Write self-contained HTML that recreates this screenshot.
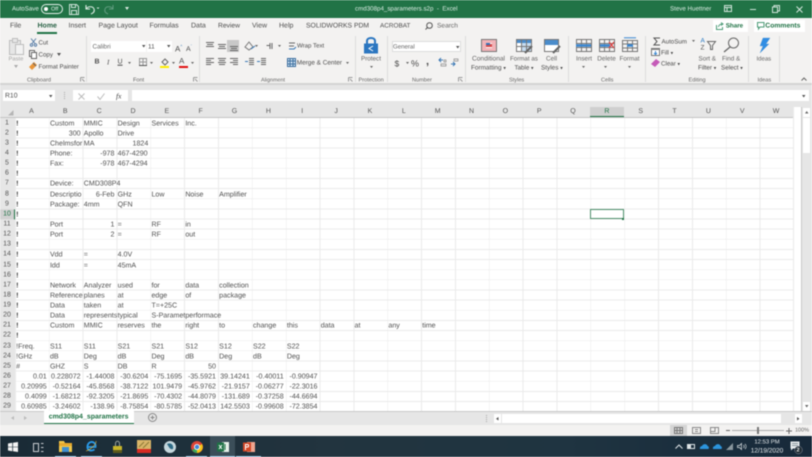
<!DOCTYPE html>
<html><head><meta charset="utf-8"><style>
html,body{margin:0;padding:0;width:812px;height:457px;overflow:hidden;background:#fff}
body{position:relative;font-family:"Liberation Sans",sans-serif;font-size:6.200px;color:#4d4d4d;filter:blur(.45px);text-rendering:geometricPrecision}
.a,.t{position:absolute}
.t{white-space:nowrap;line-height:10px;transform:translateY(.7px)}
.g{color:#666;font-size:5.600px}
svg{position:absolute;overflow:visible}
.rw{position:absolute;left:14.500px;height:10.140px;width:778.600px;display:grid;grid-template-columns:repeat(23,33.850px);line-height:10px;font-size:7.100px;color:#4f4f4f;transform:translateY(.4px)}
.rw>*{white-space:nowrap;padding-left:1.600px;font-style:normal;font-weight:400}
.rw>i:first-child{color:#2e2e2e;font-weight:700}
.rw>i.x:first-child{color:#4f4f4f;font-weight:400}
.rw>u{text-decoration:none;text-align:right;padding:0 1.600px 0 0;overflow:hidden}
.rn{position:absolute;left:0;width:14px;text-align:center;line-height:10px;font-size:7px;color:#555;transform:translateY(.4px)}
.ch{position:absolute;top:107px;height:10px;width:33.850px;text-align:center;line-height:10px;font-size:7px;color:#555}
</style></head><body>
<!-- title bar -->
<div class="a" style="left:0;top:0;width:812px;height:18px;background:#217346"></div>
<div class="t" style="left:12px;top:4px;color:#dfeee6">AutoSave</div>
<div class="a" style="left:41px;top:4px;width:20px;height:8px;border:1px solid #e4f0ea;border-radius:5px"></div>
<div class="a" style="left:44px;top:6.500px;width:4px;height:4px;background:#fff;border-radius:50%"></div>
<div class="t" style="left:51px;top:4px;color:#e4f0ea;font-size:5.500px">Off</div>
<svg style="left:69px;top:4px" width="10" height="11" fill="none" stroke="#cfe3d9" stroke-width="1"><path d="M.5.500h7l2 2v8H.5zM2.500.5v3h4v-3M2.500 10.500v-4h5v4"/></svg>
<svg style="left:85px;top:4px" width="14" height="10" fill="none" stroke="#dbeae2" stroke-width="1.100"><path d="M1 1v4h4M1 5c2-3 7-3 8 0s-1 4-3 5"/><path d="M11.500 3.500h3l-1.500 1.500z" fill="#dbeae2" stroke="none"/></svg>
<svg style="left:104px;top:4px" width="14" height="10" fill="none" stroke="#5f9b7e" stroke-width="1"><path d="M9 1v4H5M9 5C7 2 2 2 1 5s1 4 3 5"/></svg>
<svg style="left:125px;top:7px" width="5" height="4" fill="#dbeae2"><path d="M0 0h4L2 3z"/></svg>
<div class="t" style="left:355px;top:4px;color:#d9eae1">cmd308p4_sparameters.s2p &nbsp;-&nbsp; Excel</div>
<div class="t" style="left:670px;top:4px;color:#d9eae1">Steve Huettner</div>
<svg style="left:724px;top:5px" width="9" height="8" fill="none" stroke="#cfe3d9"><path d="M.5.500h7v6h-7zM.5 2.500h7M3 2.500v4"/></svg>
<div class="a" style="left:750px;top:9px;width:6px;height:1px;background:#cfe3d9"></div>
<svg style="left:772px;top:5px" width="8" height="8" fill="none" stroke="#cfe3d9"><path d="M.5 2h5v5.500h-5zM2 2V.5h5.500V6H6"/></svg>
<svg style="left:796px;top:6px" width="7" height="7" fill="none" stroke="#d5e6dd"><path d="M.5.500l6 6M6.500.5l-6 6"/></svg>

<!-- ribbon -->
<div class="a" style="left:0;top:18px;width:812px;height:66px;background:#f3f2f1"></div>
<div class="t" style="left:10px;top:21px;font-size:7px">File</div>
<div class="t" style="left:37.500px;top:21px;font-size:7px;color:#2b6347;font-weight:700">Home</div>
<div class="a" style="left:37px;top:32px;width:20px;height:1.500px;background:#217346"></div>
<div class="t" style="left:68.500px;top:21px;font-size:7px">Insert</div>
<div class="t" style="left:98.500px;top:21px;font-size:7px">Page Layout</div>
<div class="t" style="left:149.500px;top:21px;font-size:7px">Formulas</div>
<div class="t" style="left:191px;top:21px;font-size:7px">Data</div>
<div class="t" style="left:218px;top:21px;font-size:6.700px">Review</div>
<div class="t" style="left:252px;top:21px;font-size:7px">View</div>
<div class="t" style="left:279px;top:21px;font-size:7px">Help</div>
<div class="t" style="left:306px;top:21px;font-size:6.800px">SOLIDWORKS PDM</div>
<div class="t" style="left:380px;top:21px;font-size:6.400px">ACROBAT</div>
<svg style="left:425px;top:22px" width="8" height="8" fill="none" stroke="#555"><circle cx="4.500" cy="3.500" r="2.800"/><path d="M2.500 5.500L.5 7.500"/></svg>
<div class="t" style="left:437px;top:21px;font-size:6.600px;color:#666">Search</div>
<div class="a" style="left:713px;top:20px;width:35px;height:12px;background:#fff"></div>
<svg style="left:716px;top:22px" width="8" height="8" fill="none" stroke="#4b9a76"><path d="M.5 3v4.500h6V5M2.500 5c0-2 2-3 4-3M5 .5l2 1.500-2 1.500"/></svg>
<div class="t" style="left:725.700px;top:21px;color:#217346;font-size:6.300px;font-weight:700">Share</div>
<div class="a" style="left:754px;top:20px;width:51px;height:12px;background:#fff"></div>
<svg style="left:757px;top:22px" width="8" height="8" fill="none" stroke="#4b9a76"><path d="M.5.500h6.500v4.500H3L1.500 7V5h-1z"/></svg>
<div class="t" style="left:765.300px;top:21px;color:#217346;font-size:6.800px;font-weight:700">Comments</div>

<!-- clipboard -->
<svg style="left:9px;top:38px" width="16" height="18" fill="#e6e6e6" stroke="#bdbdbd"><path d="M.5 2.500h11v14H.5z"/><path d="M3.500.5h5v4h-5z"/><path d="M6.500 6.500h8v10h-8z" fill="#f2f2f2"/></svg>
<div class="t" style="left:8.500px;top:54px;color:#a6a6a6;font-size:5.800px">Paste</div>
<svg style="left:14px;top:65px" width="4" height="3" fill="#aaa"><path d="M0 0h4L2 3z"/></svg>
<svg style="left:30px;top:38px" width="7" height="9" fill="none" stroke="#5a7fa8"><path d="M1 .5l4 5M6 .5l-4 5"/><circle cx="1.500" cy="7" r="1.200"/><circle cx="5.500" cy="7" r="1.200"/></svg>
<div class="t" style="left:38.500px;top:38px;font-size:6.200px">Cut</div>
<svg style="left:29px;top:50px" width="9" height="9" fill="#fff" stroke="#666"><path d="M.5.500h5v6h-5z"/><path d="M2.500 2.500h5v6h-5z"/></svg>
<div class="t" style="left:38.500px;top:50px;font-size:6.200px">Copy</div>
<svg style="left:57px;top:53px" width="4" height="3" fill="#555"><path d="M0 0h4L2 3z"/></svg>
<svg style="left:29px;top:62px" width="9" height="9"><path d="M0 5l5-5 3 3-5 5z" fill="#e8953a"/><path d="M4 1l3 3" stroke="#666" fill="none"/></svg>
<div class="t" style="left:38.500px;top:62px;font-size:6.100px">Format Painter</div>
<div class="t g" style="left:27px;top:74.500px">Clipboard</div>
<!-- separators -->
<div class="a" style="left:86px;top:36px;width:1px;height:46px;background:#dcdcdc"></div>
<div class="a" style="left:198.500px;top:36px;width:1px;height:46px;background:#dcdcdc"></div>
<div class="a" style="left:354.500px;top:36px;width:1px;height:46px;background:#dcdcdc"></div>
<div class="a" style="left:386.500px;top:36px;width:1px;height:46px;background:#dcdcdc"></div>
<div class="a" style="left:465px;top:36px;width:1px;height:46px;background:#dcdcdc"></div>
<div class="a" style="left:568px;top:36px;width:1px;height:46px;background:#dcdcdc"></div>
<div class="a" style="left:645px;top:36px;width:1px;height:46px;background:#dcdcdc"></div>
<div class="a" style="left:748px;top:36px;width:1px;height:46px;background:#dcdcdc"></div>
<div class="a" style="left:779px;top:36px;width:1px;height:46px;background:#dcdcdc"></div>

<!-- font -->
<div class="a" style="left:90.500px;top:41px;width:55px;height:11px;background:#fff"></div>
<div class="t" style="left:92.500px;top:41.500px;font-size:6.400px;color:#666">Calibri</div>
<svg style="left:141.500px;top:45px" width="4" height="3" fill="#555"><path d="M0 0h3.500L1.700 2.500z"/></svg>
<div class="a" style="left:146.500px;top:41px;width:25px;height:11px;background:#fff"></div>
<div class="t" style="left:148px;top:41.500px;font-size:6.400px">11</div>
<svg style="left:167px;top:45px" width="4" height="3" fill="#555"><path d="M0 0h3.500L1.700 2.500z"/></svg>
<div class="t" style="left:175px;top:40.500px;font-size:8px">A<sup style="font-size:4px;color:#3a78b5">^</sup></div>
<div class="t" style="left:186px;top:41px;font-size:7px">A<sup style="font-size:4px;color:#3a78b5">ˇ</sup></div>
<div class="t" style="left:94.500px;top:56.500px;font-size:7px;font-weight:700">B</div>
<div class="t" style="left:107px;top:56.500px;font-size:7px;font-style:italic;font-family:'Liberation Serif',serif">I</div>
<div class="t" style="left:117.500px;top:56.500px;font-size:7px;text-decoration:underline">U</div>
<svg style="left:128px;top:62px" width="4" height="3" fill="#666"><path d="M0 0h3L1.500 2z"/></svg>
<svg style="left:138px;top:57px" width="10" height="10" fill="none" stroke="#999"><path d="M1.500 1.500h7v7h-7zM5 1.500v7M1.500 5h7"/><path d="M1 8.500h8" stroke="#555"/></svg>
<svg style="left:150px;top:62px" width="4" height="3" fill="#666"><path d="M0 0h3L1.500 2z"/></svg>
<svg style="left:160px;top:58px" width="10" height="8" fill="none" stroke="#666"><path d="M2 4l3-3 3 3-3 3z"/></svg>
<div class="a" style="left:160px;top:65.500px;width:9px;height:2px;background:#ffee00"></div>
<svg style="left:172px;top:62px" width="4" height="3" fill="#666"><path d="M0 0h3L1.500 2z"/></svg>
<div class="t" style="left:179px;top:56px;font-size:8px;color:#555">A</div>
<div class="a" style="left:178.500px;top:65.500px;width:9px;height:2px;background:#e01010"></div>
<svg style="left:190.500px;top:62px" width="4" height="3" fill="#666"><path d="M0 0h3L1.500 2z"/></svg>
<div class="t g" style="left:133px;top:74.500px">Font</div>
<svg style="left:80px;top:77px" width="5" height="5" fill="none" stroke="#999"><path d="M.5.500h4M.5.500v4M2 2l2.500 2.500"/></svg>
<svg style="left:192.500px;top:77px" width="5" height="5" fill="none" stroke="#999"><path d="M.5.500h4M.5.500v4M2 2l2.500 2.500"/></svg>
<svg style="left:348px;top:77px" width="5" height="5" fill="none" stroke="#999"><path d="M.5.500h4M.5.500v4M2 2l2.500 2.500"/></svg>
<svg style="left:458px;top:77px" width="5" height="5" fill="none" stroke="#999"><path d="M.5.500h4M.5.500v4M2 2l2.500 2.500"/></svg>

<!-- alignment -->
<div class="a" style="left:227px;top:40px;width:12px;height:12px;background:#c8c8c8"></div>
<svg style="left:205px;top:42px" width="34" height="9" fill="none" stroke="#666"><path d="M1 .5h8M2 2.500h6M1 4.500h8M13 2.500h8M14 4.500h6M13 6.500h8M25 4.500h8M26 6.500h6M25 8.500h8"/></svg>
<svg style="left:244px;top:41px" width="12" height="10" fill="none" stroke="#777"><path d="M1 6l4-5 4 5-4 3z"/><path d="M7 8l4-3" stroke="#3a78b5"/></svg>
<svg style="left:255px;top:45px" width="4" height="3" fill="#666"><path d="M0 0h3L1.500 2z"/></svg>
<svg style="left:266px;top:42px" width="9" height="8" fill="none" stroke="#666"><path d="M.5 3.500h3M6 1v6M4 1v6"/></svg>
<svg style="left:278px;top:45px" width="4" height="3" fill="#666"><path d="M0 0h3L1.500 2z"/></svg>
<svg style="left:288px;top:42px" width="9" height="10" fill="none" stroke="#666"><path d="M1 1h6M1 4h5"/><path d="M1 7h5l2-2" stroke="#3a78b5"/></svg>
<div class="t" style="left:297px;top:41px;font-size:6.100px">Wrap Text</div>
<svg style="left:205px;top:58px" width="34" height="9" fill="none" stroke="#666"><path d="M1 .5h8M1 2.500h5M1 4.500h8M1 6.500h5M13 .5h8M14 2.500h6M13 4.500h8M14 6.500h6M25 .5h8M28 2.500h5M25 4.500h8M28 6.500h5"/></svg>
<svg style="left:245px;top:58px" width="21" height="9" fill="none" stroke="#666"><path d="M4 .5h5M4 2.500h5M4 4.500h5M4 6.500h5M16 .5h5M16 2.500h5M16 4.500h5M16 6.500h5"/><path d="M0 3.500h3M12 3.500h3" stroke="#3a78b5"/></svg>
<svg style="left:287px;top:58px" width="9" height="9" fill="#cfe2f3" stroke="#3d6f9e"><path d="M.5.500h8v8h-8zM.5 3h8M.5 6h8M3 .5v8M6 .5v8"/></svg>
<div class="t" style="left:296.800px;top:58px;font-size:6.400px">Merge &amp; Center</div>
<svg style="left:346px;top:62px" width="4" height="3" fill="#666"><path d="M0 0h3L1.500 2z"/></svg>
<div class="t g" style="left:261px;top:74.500px;font-size:5.400px">Alignment</div>

<!-- protect -->
<svg style="left:363px;top:37px" width="16" height="17"><path d="M4 7V4c0-4 8-4 8 0v3" fill="none" stroke="#2b76c0" stroke-width="2"/><path d="M1 6.500h14v10H1z" fill="#2b76c0"/><path d="M10 9l-4 2.500 4 2.500" fill="none" stroke="#fff"/></svg>
<div class="t" style="left:361px;top:54px;font-size:6.300px;color:#666">Protect</div>
<svg style="left:369.500px;top:66px" width="4" height="3" fill="#666"><path d="M0 0h3L1.500 2z"/></svg>
<div class="t g" style="left:358.500px;top:74.500px">Protection</div>

<!-- number -->
<div class="a" style="left:391.500px;top:41px;width:69px;height:11px;background:#fff;border:.5px solid #ddd;box-sizing:border-box"></div>
<div class="t" style="left:393px;top:41.500px;font-size:6.100px;color:#666">General</div>
<svg style="left:456px;top:45.500px" width="4" height="3" fill="#555"><path d="M0 0h3.500L1.700 2.500z"/></svg>
<div class="t" style="left:394.500px;top:57.500px;font-size:8.500px">$</div>
<svg style="left:405.500px;top:62px" width="4" height="3" fill="#666"><path d="M0 0h3L1.500 2z"/></svg>
<div class="t" style="left:411px;top:57.500px;font-size:9px">%</div>
<div class="t" style="left:426px;top:56px;font-size:11px;font-weight:700">,</div>
<svg style="left:439px;top:58px" width="8" height="9" fill="none" stroke="#3a78b5"><path d="M0 2h4M2 0L0 2l2 2"/><path d="M5 2h2v2H5zM2 6h5v2H2z" stroke="#888" stroke-width=".7"/></svg>
<svg style="left:451px;top:58px" width="8" height="9" fill="none" stroke="#3a78b5"><path d="M0 6h4M2 4l2 2-2 2"/><path d="M3 1h4v2H3z" stroke="#888" stroke-width=".7"/></svg>
<div class="t g" style="left:412px;top:74.500px">Number</div>

<!-- styles -->
<svg style="left:481px;top:39px" width="16" height="13"><path d="M.5.500h15v12H.5z" fill="#fff" stroke="#777"/><path d="M1 1h4v11H1zM11 1h4v11h-4zM5 1h6v3H5zM5 9h6v3H5z" fill="#f2b3b8"/><path d="M5 5h6v3H5z" fill="#d84848"/><path d="M5 4h4v2H5z" fill="#3272b8"/></svg>
<div class="t" style="left:472px;top:54px;font-size:6.600px;color:#666">Conditional</div>
<div class="t" style="left:471px;top:63px;font-size:6.400px">Formatting <span style="font-size:5px">▾</span></div>
<svg style="left:516px;top:39px" width="17" height="15"><path d="M.5.500h15v12H.5z" fill="#fff" stroke="#777"/><path d="M1 1h14v3H1z" fill="#4a8ccb"/><path d="M6 4h9v8H6z" fill="#c6dcf0"/><path d="M1 7.500h14M5.500 1v11M10.500 1v11" stroke="#777"/><path d="M9 14l7-7" stroke="#666" stroke-width="2"/></svg>
<div class="t" style="left:510px;top:54px;font-size:6.200px;color:#666">Format as</div>
<div class="t" style="left:514.500px;top:63px;font-size:6.200px">Table <span style="font-size:5px">▾</span></div>
<svg style="left:544px;top:39px" width="17" height="15"><path d="M.5.500h14v12H.5z" fill="#fff" stroke="#777"/><path d="M1 1h13v5H1z" fill="#4a8ccb"/><path d="M9 14l7-7" stroke="#666" stroke-width="2"/></svg>
<div class="t" style="left:546px;top:54px;font-size:6.400px;color:#666">Cell</div>
<div class="t" style="left:541px;top:63px;font-size:6.400px">Styles <span style="font-size:5px">▾</span></div>
<div class="t g" style="left:509px;top:74.500px">Styles</div>

<!-- cells -->
<svg style="left:576px;top:39px" width="16" height="13" fill="none" stroke="#777"><path d="M.5.500h15v12H.5zM.5 4.500h15M.5 8.500h15M5.500.5v12M10.500.5v12"/><path d="M0 6.500h15" stroke="#3a86d0" stroke-width="2.500"/></svg>
<div class="t" style="left:576px;top:54px;font-size:6.400px;color:#666">Insert</div>
<svg style="left:581.500px;top:66px" width="4" height="3" fill="#666"><path d="M0 0h3L1.500 2z"/></svg>
<svg style="left:599px;top:39px" width="16" height="13" fill="none" stroke="#777"><path d="M.5.500h15v12H.5zM.5 4.500h15M.5 8.500h15M5.500.5v12M10.500.5v12"/><path d="M1 6.500h10" stroke="#3a86d0" stroke-width="2.500"/><path d="M10 3l5 6M15 3l-5 6" stroke="#e04040" stroke-width="1.200"/></svg>
<div class="t" style="left:597.300px;top:54px;font-size:6.400px;color:#666">Delete</div>
<svg style="left:604px;top:66px" width="4" height="3" fill="#666"><path d="M0 0h3L1.500 2z"/></svg>
<svg style="left:622px;top:37px" width="16" height="15" fill="none" stroke="#777"><path d="M.5 3.500h15v11H.5zM.5 7h15M.5 11h15M5.500 3.500v11M10.500 3.500v11"/><path d="M2 .8h12" stroke="#3a86d0"/><path d="M5 8.500h6" stroke="#3a86d0" stroke-width="2.500"/></svg>
<div class="t" style="left:619.500px;top:54px;font-size:6.300px;color:#666">Format</div>
<svg style="left:628px;top:66px" width="4" height="3" fill="#666"><path d="M0 0h3L1.500 2z"/></svg>
<div class="t g" style="left:601px;top:74.500px">Cells</div>

<!-- editing -->
<svg style="left:652.500px;top:37px" width="8" height="9" fill="none" stroke="#555"><path d="M7 1H1l3 3.500L1 8h6"/></svg>
<div class="t" style="left:661.500px;top:36.500px;font-size:6.200px">AutoSum</div>
<svg style="left:692px;top:40px" width="4" height="3" fill="#666"><path d="M0 0h3L1.500 2z"/></svg>
<svg style="left:651px;top:48px" width="9" height="8" fill="#fff" stroke="#777"><path d="M.5.500h8v7h-8z"/><path d="M.5 1.500h8" stroke="#888"/><path d="M4.500 3v3M3 5l1.500 1.500L6 5" stroke="#3a86d0" fill="none"/></svg>
<div class="t" style="left:661px;top:47.500px;font-size:6.200px">Fill <span style="font-size:5px">▾</span></div>
<svg style="left:651px;top:59px" width="9" height="9"><path d="M0 5l5-5 4 3-5 5z" fill="#c55bb8"/></svg>
<div class="t" style="left:661px;top:59px;font-size:6.200px">Clear <span style="font-size:5px">▾</span></div>
<div class="t" style="left:700.500px;top:37px;font-size:6.500px;color:#2f7dc4;line-height:7px">A<br><span style="color:#555">Z</span></div>
<svg style="left:707px;top:41px" width="9" height="9" fill="none" stroke="#666"><path d="M.5.500h8L5.500 4.500v4h-2v-4z"/></svg>
<div class="t" style="left:698.500px;top:54px;font-size:6.300px;color:#666">Sort &amp;</div>
<div class="t" style="left:698px;top:63px;font-size:6.300px">Filter <span style="font-size:5px">▾</span></div>
<svg style="left:723px;top:37px" width="17" height="16" fill="none" stroke="#666"><circle cx="10.500" cy="6" r="5" stroke-width="1"/><path d="M7 10l-6 5" stroke-width="1.300"/></svg>
<div class="t" style="left:722px;top:54px;font-size:6.300px;color:#666">Find &amp;</div>
<div class="t" style="left:721px;top:63px;font-size:6.300px">Select <span style="font-size:5px">▾</span></div>
<div class="t g" style="left:688.500px;top:74.500px">Editing</div>
<svg style="left:757px;top:38px" width="13" height="15"><path d="M6 0h7L9 6h3L3 15l3-7H3z" fill="#2f8de4" stroke="#5d9bd1" stroke-width=".4"/></svg>
<div class="t" style="left:756.500px;top:54px;font-size:6px;color:#666">Ideas</div>
<div class="t g" style="left:757.500px;top:74.500px">Ideas</div>
<svg style="left:801px;top:77px" width="6" height="4" fill="none" stroke="#666"><path d="M.5 3.500L3 1l2.500 2.500"/></svg>

<!-- formula bar -->
<div class="a" style="left:0;top:84px;width:812px;height:23px;background:#e6e6e6"></div>
<div class="a" style="left:0;top:83px;width:812px;height:1.500px;background:#d3d3d3"></div>
<div class="a" style="left:3px;top:90px;width:52px;height:11px;background:#fff"></div>
<div class="t" style="left:5px;top:90.500px;font-size:6.800px">R10</div>
<svg style="left:49px;top:94.500px" width="4" height="3" fill="#555"><path d="M0 0h3.500L1.700 2.500z"/></svg>
<div class="a" style="left:64px;top:92px;width:1.500px;height:7px;border-left:1.500px dotted #aaa"></div>
<div class="a" style="left:73px;top:90px;width:55px;height:11px;background:#fff"></div>
<svg style="left:78px;top:92.500px" width="7" height="7" fill="none" stroke="#bbb"><path d="M.5.500l6 6M6.500.5l-6 6"/></svg>
<svg style="left:97px;top:92.500px" width="8" height="7" fill="none" stroke="#bbb"><path d="M.5 3.500l2.500 3 4.500-6"/></svg>
<div class="t" style="left:116px;top:90.500px;font-size:7.500px;font-style:italic;font-family:'Liberation Serif',serif;color:#444">fx</div>
<div class="a" style="left:132px;top:90px;width:677px;height:11px;background:#fff"></div>
<svg style="left:802px;top:94.500px" width="4" height="3" fill="#555"><path d="M0 0h3.500L1.700 2.500z"/></svg>

<!-- sheet bg and headers -->
<div class="a" style="left:0;top:107px;width:793px;height:10.500px;background:#e6e6e6;border-bottom:.5px solid #c4c4c4;box-sizing:border-box"></div>
<div class="a" style="left:0;top:117.500px;width:14.500px;height:294px;background:#e6e6e6"></div>
<svg style="left:8px;top:110px" width="6" height="6" fill="#b5b5b5"><path d="M5.500 0v5.500H0z"/></svg>
<!-- grid lines -->
<div class="a" style="left:14.500px;top:117.500px;width:778.600px;height:294px;background-image:repeating-linear-gradient(to right,#ebebeb 0,#ebebeb .8px,transparent .8px,transparent 33.850px),repeating-linear-gradient(to bottom,transparent 0,transparent 9.340px,#ebebeb 9.340px,#ebebeb 10.140px)"></div>
<div class="a" style="left:793px;top:107px;width:8px;height:304px;background:#fff;border-left:.8px solid #ebebeb;box-sizing:border-box"></div>

<div class="ch" style="left:14.500px">A</div><div class="ch" style="left:48.350px">B</div><div class="ch" style="left:82.200px">C</div><div class="ch" style="left:116.050px">D</div><div class="ch" style="left:149.900px">E</div><div class="ch" style="left:183.750px">F</div><div class="ch" style="left:217.600px">G</div><div class="ch" style="left:251.450px">H</div><div class="ch" style="left:285.300px">I</div><div class="ch" style="left:319.150px">J</div><div class="ch" style="left:353px">K</div><div class="ch" style="left:386.850px">L</div><div class="ch" style="left:420.700px">M</div><div class="ch" style="left:454.550px">N</div><div class="ch" style="left:488.400px">O</div><div class="ch" style="left:522.250px">P</div><div class="ch" style="left:556.100px">Q</div>
<div class="ch" style="left:589.950px;background:#cfcfcf;color:#217346;border-bottom:1px solid #217346;box-sizing:border-box">R</div>
<div class="ch" style="left:623.800px">S</div><div class="ch" style="left:657.650px">T</div><div class="ch" style="left:691.500px">U</div><div class="ch" style="left:725.350px">V</div><div class="ch" style="left:759.200px">W</div>

<!-- row numbers -->
<div class="rn" style="top:117.500px">1</div><div class="rn" style="top:127.600px">2</div><div class="rn" style="top:137.800px">3</div><div class="rn" style="top:147.900px">4</div><div class="rn" style="top:158.100px">5</div><div class="rn" style="top:168.200px">6</div><div class="rn" style="top:178.300px">7</div><div class="rn" style="top:188.500px">8</div><div class="rn" style="top:198.600px">9</div>
<div class="rn" style="top:208.800px;color:#217346;background:#d0d0d0;height:10px;border-right:1px solid #217346">10</div>
<div class="rn" style="top:218.900px">11</div><div class="rn" style="top:229px">12</div><div class="rn" style="top:239.200px">13</div><div class="rn" style="top:249.300px">14</div><div class="rn" style="top:259.500px">15</div><div class="rn" style="top:269.600px">16</div><div class="rn" style="top:279.700px">17</div><div class="rn" style="top:289.900px">18</div><div class="rn" style="top:300px">19</div><div class="rn" style="top:310.200px">20</div><div class="rn" style="top:320.300px">21</div><div class="rn" style="top:330.400px">22</div><div class="rn" style="top:340.600px">23</div><div class="rn" style="top:350.700px">24</div><div class="rn" style="top:360.900px">25</div><div class="rn" style="top:371px">26</div><div class="rn" style="top:381.100px">27</div><div class="rn" style="top:391.300px">28</div><div class="rn" style="top:401.400px">29</div>

<!-- cells -->
<div class="rw" style="top:117.500px"><i>!</i><i>Custom</i><i>MMIC</i><i>Design</i><i>Services</i><i>Inc.</i></div>
<div class="rw" style="top:127.600px"><i>!</i><u>300</u><i>Apollo</i><i>Drive</i></div>
<div class="rw" style="top:137.800px"><i>!</i><i>Chelmsfor</i><i>MA</i><u>1824</u></div>
<div class="rw" style="top:147.900px"><i>!</i><i>Phone:</i><u>-978</u><i>467-4290</i></div>
<div class="rw" style="top:158.100px"><i>!</i><i>Fax:</i><u>-978</u><i>467-4294</i></div>
<div class="rw" style="top:168.200px"><i>!</i></div>
<div class="rw" style="top:178.300px"><i>!</i><i>Device:</i><i>CMD308P4</i></div>
<div class="rw" style="top:188.500px"><i>!</i><i>Descriptio</i><u>6-Feb</u><i>GHz</i><i>Low</i><i>Noise</i><i>Amplifier</i></div>
<div class="rw" style="top:198.600px"><i>!</i><i>Package:</i><i>4mm</i><i>QFN</i></div>
<div class="rw" style="top:208.800px"><i>!</i></div>
<div class="rw" style="top:218.900px"><i>!</i><i>Port</i><u>1</u><i>=</i><i>RF</i><i>in</i></div>
<div class="rw" style="top:229px"><i>!</i><i>Port</i><u>2</u><i>=</i><i>RF</i><i>out</i></div>
<div class="rw" style="top:239.200px"><i>!</i></div>
<div class="rw" style="top:249.300px"><i>!</i><i>Vdd</i><i>=</i><i>4.0V</i></div>
<div class="rw" style="top:259.500px"><i>!</i><i>Idd</i><i>=</i><i>45mA</i></div>
<div class="rw" style="top:269.600px"><i>!</i></div>
<div class="rw" style="top:279.700px"><i>!</i><i>Network</i><i>Analyzer</i><i>used</i><i>for</i><i>data</i><i>collection</i></div>
<div class="rw" style="top:289.900px"><i>!</i><i>Reference</i><i>planes</i><i>at</i><i>edge</i><i>of</i><i>package</i></div>
<div class="rw" style="top:300px"><i>!</i><i>Data</i><i>taken</i><i>at</i><i>T=+25C</i></div>
<div class="rw" style="top:310.200px"><i>!</i><i>Data</i><i>represents</i><i>typical</i><i>S-Paramet</i><i>performace</i></div>
<div class="rw" style="top:320.300px"><i>!</i><i>Custom</i><i>MMIC</i><i>reserves</i><i>the</i><i>right</i><i>to</i><i>change</i><i>this</i><i>data</i><i>at</i><i>any</i><i>time</i></div>
<div class="rw" style="top:330.400px"><i>!</i></div>
<div class="rw" style="top:340.600px"><i class="x">!Freq.</i><i>S11</i><i>S11</i><i>S21</i><i>S21</i><i>S12</i><i>S12</i><i>S22</i><i>S22</i></div>
<div class="rw" style="top:350.700px"><i class="x">!GHz</i><i>dB</i><i>Deg</i><i>dB</i><i>Deg</i><i>dB</i><i>Deg</i><i>dB</i><i>Deg</i></div>
<div class="rw" style="top:360.900px"><i class="x">#</i><i>GHZ</i><i>S</i><i>DB</i><i>R</i><u>50</u></div>
<div class="rw" style="top:371px"><u>0.01</u><u>0.228072</u><u>-1.44008</u><u>-30.6204</u><u>-75.1695</u><u>-35.5921</u><u>39.14241</u><u>-0.40011</u><u>-0.90947</u></div>
<div class="rw" style="top:381.100px"><u>0.20995</u><u>-0.52164</u><u>-45.8568</u><u>-38.7122</u><u>101.9479</u><u>-45.9762</u><u>-21.9157</u><u>-0.06277</u><u>-22.3016</u></div>
<div class="rw" style="top:391.300px"><u>0.4099</u><u>-1.68212</u><u>-92.3205</u><u>-21.8695</u><u>-70.4302</u><u>-44.8079</u><u>-131.689</u><u>-0.37258</u><u>-44.6694</u></div>
<div class="rw" style="top:401.400px"><u>0.60985</u><u>-3.24602</u><u>-138.96</u><u>-8.75854</u><u>-80.5785</u><u>-52.0413</u><u>142.5503</u><u>-0.99608</u><u>-72.3854</u></div>

<!-- selection -->
<div class="a" style="left:589.500px;top:208.500px;width:34px;height:10.500px;border:1px solid #217346;box-sizing:border-box;opacity:.8"></div>
<div class="a" style="left:622px;top:217.500px;width:2px;height:2px;background:#217346"></div>

<!-- v scrollbar -->
<div class="a" style="left:801px;top:107px;width:11px;height:304px;background:#e6e6e6;border-left:1px solid #c8c8c8;box-sizing:border-box"></div>
<div class="a" style="left:803px;top:108px;width:7px;height:9px;background:#fff"></div>
<svg style="left:804.500px;top:111px" width="4" height="3" fill="#666"><path d="M0 2.500h3.500L1.700 0z"/></svg>
<div class="a" style="left:803px;top:118px;width:7px;height:35px;background:#fff"></div>
<div class="a" style="left:803px;top:402px;width:7px;height:9px;background:#fff"></div>
<svg style="left:804.500px;top:405px" width="4" height="3" fill="#666"><path d="M0 0h3.500L1.700 2.500z"/></svg>

<!-- sheet tabs -->
<div class="a" style="left:0;top:411px;width:812px;height:14px;background:#e6e6e6;border-top:1px solid #c8c8c8;box-sizing:border-box"></div>
<svg style="left:11px;top:416px" width="16" height="5" fill="#bbb"><path d="M3 0v4L0 2zM13 0v4l3-2z"/></svg>
<div class="a" style="left:44px;top:411px;width:90px;height:13px;background:#fff;border-bottom:1px solid #217346;box-sizing:border-box"></div>
<div class="t" style="left:48.700px;top:412px;font-size:7px;font-weight:700;color:#217346">cmd308p4_sparameters</div>
<svg style="left:148px;top:413px" width="9" height="9" fill="none" stroke="#888"><circle cx="4.500" cy="4.500" r="4"/><path d="M2.500 4.500h4M4.500 2.500v4"/></svg>
<div class="a" style="left:486px;top:415px;width:1.500px;height:7px;border-left:1.500px dotted #aaa"></div>
<div class="a" style="left:494px;top:414px;width:7px;height:9px;background:#fff"></div>
<svg style="left:496px;top:417px" width="3" height="4" fill="#555"><path d="M2.500 0v3.500L0 1.700z"/></svg>
<div class="a" style="left:502px;top:414px;width:279px;height:9px;background:#fff"></div>
<div class="a" style="left:795px;top:414px;width:7px;height:9px;background:#fff"></div>
<svg style="left:797px;top:417px" width="3" height="4" fill="#555"><path d="M0 0v3.500L2.500 1.700z"/></svg>

<!-- status bar -->
<div class="a" style="left:0;top:425px;width:812px;height:11px;background:#f3f2f1"></div>
<div class="a" style="left:670px;top:425px;width:17px;height:11px;background:#d5d5d5"></div>
<svg style="left:674px;top:427px" width="9" height="7" fill="none" stroke="#777"><path d="M.5.500h8v6h-8zM.5 3.500h8M3 .5v6M6 .5v6"/></svg>
<svg style="left:692px;top:427px" width="9" height="7" fill="none" stroke="#888"><path d="M.5.500h8v6h-8zM3 2.500h3M3 4.500h3"/></svg>
<svg style="left:710px;top:427px" width="9" height="7" fill="none" stroke="#888"><path d="M.5.500h8v6h-8zM5 .5v4H.5"/></svg>
<div class="a" style="left:726px;top:430px;width:4px;height:1px;background:#666"></div>
<div class="a" style="left:732px;top:430px;width:52px;height:1px;background:#aaa"></div>
<div class="a" style="left:756.500px;top:427px;width:2.500px;height:7px;background:#777"></div>
<svg style="left:785.500px;top:427.500px" width="6" height="6" fill="none" stroke="#666"><path d="M0 3h6M3 0v6"/></svg>
<div class="t" style="left:795px;top:425px;font-size:5.500px;color:#666">100%</div>

<!-- taskbar -->
<div class="a" style="left:0;top:436px;width:812px;height:21px;background:linear-gradient(to right,#1a2b36,#22343f 40%,#1f3441 70%,#17293a)"></div>
<svg style="left:8px;top:442px" width="10" height="10" fill="#f4f4f4"><path d="M0 1.500l4.300-.7v3.900H0zM5 .7L10 0v4.700H5zM0 5.300h4.300v3.900L0 8.500zM5 5.300h5V10l-5-.7z"/></svg>
<svg style="left:33px;top:443px" width="11" height="9" fill="none" stroke="#c8ced2"><path d="M.5.500h5v8h-5zM8 .5h2.500M8 4.500h2.500M8 8.500h2.500"/></svg>
<svg style="left:59px;top:441px" width="14" height="11"><path d="M0 0h5l1 2h7v9H0z" fill="#f3c84a"/><path d="M0 2h13v3H0z" fill="#e7a92e"/><path d="M3 6h7v5H3z" fill="#3f8fd0"/></svg>
<div class="a" style="left:55px;top:455.500px;width:21px;height:1.500px;background:#9ac3e0"></div>
<svg style="left:85px;top:440px" width="13" height="13" fill="none"><path d="M2.500 7h8C11 3.500 8.500 1.500 6 2 3.500 2.500 2 5 2.500 8c.5 2.500 3.500 3.500 7 1.500" stroke="#2a9bea" stroke-width="1.800"/><path d="M11 1c1 3-6 9-10 10" stroke="#e8b93a" stroke-width=".6"/></svg>
<div class="a" style="left:81px;top:455.500px;width:21px;height:1.500px;background:#9ac3e0"></div>
<svg style="left:113px;top:441px" width="9" height="12"><path d="M2.500 5V2.500c0-3 4-3 4 0V5" fill="none" stroke="#9aa19a"/><path d="M0 5h9v7H0z" fill="#c8b52a"/><path d="M0 9h9v3H0z" fill="#5d5a1c"/></svg>
<svg style="left:137px;top:440px" width="14" height="13"><path d="M0 0h14v9H0z" fill="#d8b568"/><path d="M0 9h14v4H0z" fill="#d72a22"/><path d="M2 7l5-5M6 8l6-6" stroke="#8c7a36"/></svg>
<svg style="left:164px;top:441px" width="12" height="12"><circle cx="6" cy="6" r="6" fill="#c5d6dc"/><path d="M3 3c4-2 7 1 6 5-3 1-4-2-6-5z" fill="#2d6a85"/></svg>
<svg style="left:191px;top:441px" width="12" height="12"><circle cx="6" cy="6" r="6" fill="#dc4437"/><path d="M6 6L1 9a6 6 0 0 0 5 3z" fill="#3ba55a"/><path d="M6 6l5-3a6 6 0 0 1-5 9z" fill="#f5c518"/><circle cx="6" cy="6" r="2.600" fill="#3f86d8" stroke="#fff" stroke-width=".8"/></svg>
<div class="a" style="left:186px;top:455.500px;width:21px;height:1.500px;background:#9ac3e0"></div>
<div class="a" style="left:210px;top:436px;width:25px;height:21px;background:#3b4e59"></div>
<svg style="left:217px;top:441px" width="12" height="12"><path d="M5 1h7v10H5z" fill="#e6efe9"/><path d="M0 1.500h7v9H0z" fill="#1e7145"/><path d="M2 4l3 4M5 4L2 8" stroke="#fff"/><path d="M8 3v6" stroke="#1e7145"/></svg>
<div class="a" style="left:210px;top:455.500px;width:25px;height:1.500px;background:#9ac3e0"></div>
<svg style="left:243px;top:441px" width="12" height="12"><path d="M4 1h8v10H4z" fill="#f0a58f"/><path d="M0 1.500h8v9H0z" fill="#d24726"/><path d="M2.500 9V3.500h2c1.500 0 1.500 2.500 0 2.500h-2" fill="none" stroke="#fff"/></svg>
<div class="a" style="left:236px;top:455.500px;width:25px;height:1.500px;background:#9ac3e0"></div>
<svg style="left:675px;top:444px" width="8" height="5" fill="none" stroke="#dde3e6"><path d="M.5 4.500L4 1l3.500 3.500"/></svg>
<svg style="left:687px;top:443px" width="9" height="7" fill="none" stroke="#dde3e6"><path d="M.5 1.500h7v4h-7z"/><path d="M1 2h3v3H1z" fill="#dde3e6" stroke="none"/></svg>
<svg style="left:700px;top:444px" width="9" height="5" fill="#2c94dc"><path d="M0 5c-.5-2 1-3 2-3 1-2.500 5-2.500 5.500 0 1.500 0 2 3 .5 3z"/></svg>
<svg style="left:713px;top:444px" width="9" height="5" fill="#2c94dc"><path d="M0 5c-.5-2 1-3 2-3 1-2.500 5-2.500 5.500 0 1.500 0 2 3 .5 3z"/></svg>
<svg style="left:726px;top:443px" width="8" height="7" fill="#8a979e"><path d="M0 7L7 0v7z"/></svg>
<svg style="left:737px;top:443px" width="10" height="7" fill="none" stroke="#dde3e6"><path d="M.5 2.500h2l2-2v6l-2-2h-2zM6.500 2c1 1 1 2 0 3M8 1c1.500 1.500 1.500 3.500 0 5" stroke-width=".7"/></svg>
<div class="t" style="left:753px;top:436.500px;width:28px;text-align:center;font-size:5.900px;color:#e3e8ea">12:53 PM</div>
<div class="t" style="left:750.500px;top:445.500px;width:33px;text-align:center;font-size:6.500px;color:#e3e8ea">12/19/2020</div>
<svg style="left:790px;top:441px" width="13" height="13"><path d="M.5.500h9v7H3L1 9.500v-2H.5z" fill="#e8ecee"/><path d="M2 2.500h6M2 4.500h6" stroke="#8a979e"/><circle cx="8.500" cy="9" r="3.800" fill="#1e2b33" stroke="#aab" stroke-width=".4"/></svg>
<div class="t" style="left:796.500px;top:445px;font-size:5.500px;color:#eee;font-weight:700">2</div>
</body></html>
